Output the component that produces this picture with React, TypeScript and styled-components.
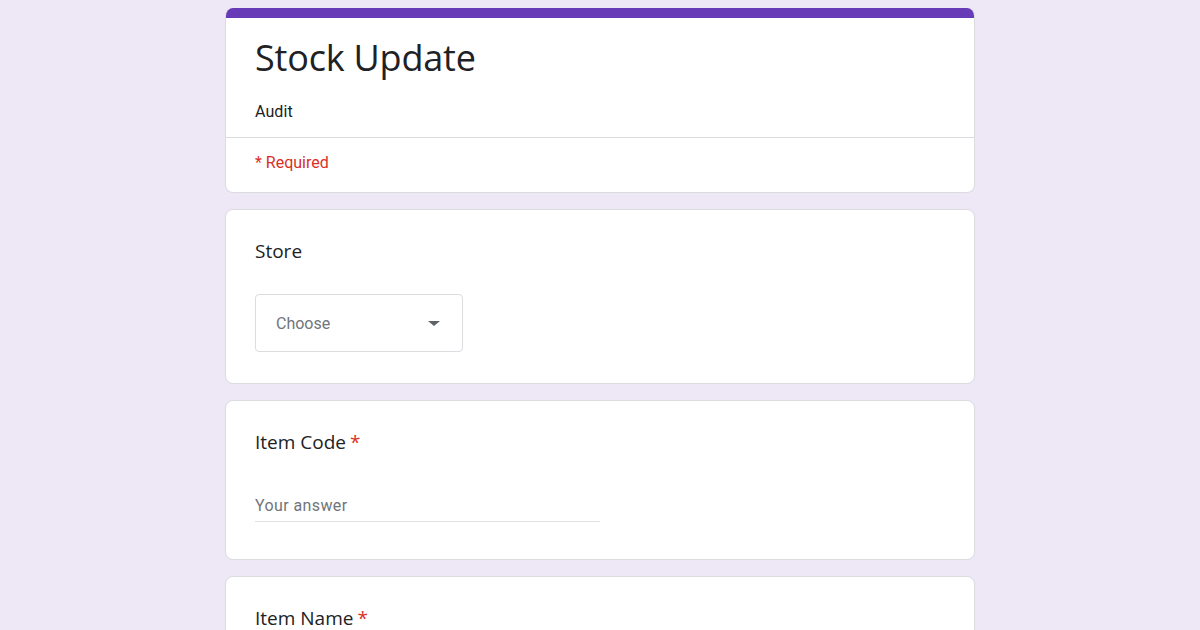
import React from 'react';
import styled, { createGlobalStyle } from 'styled-components';

const GlobalStyle = createGlobalStyle`
  html, body {
    margin: 0;
    padding: 0;
    background: #ede7f6;
  }
  * {
    box-sizing: border-box;
  }
`;

const Page = styled.div`
  display: flex;
  flex-direction: column;
  align-items: center;
  gap: 16px;
  padding: 8px 0 40px;
  font-family: Roboto, "Liberation Sans", sans-serif;
  color: #202124;
`;

const Card = styled.div`
  width: 750px;
  background: #ffffff;
  border: 1px solid #dadce0;
  border-radius: 8px;
  overflow: hidden;
`;

const HeaderCard = styled(Card)`
  border-top: none;
`;

const TopBar = styled.div`
  height: 10px;
  background: #673ab7;
`;

const HeaderBody = styled.div`
  padding: 19px 29px 15px;
  border-bottom: 1px solid #dadce0;
`;

const Title = styled.h1`
  margin: 0;
  font-family: "Open Sans", "Noto Sans", sans-serif;
  font-weight: 400;
  font-size: 36px;
  line-height: 42px;
  letter-spacing: -0.2px;
  color: #202124;
`;

const Description = styled.div`
  margin-top: 23px;
  font-size: 16px;
  line-height: 20px;
  letter-spacing: 0.1px;
`;

const RequiredNote = styled.div`
  padding: 15px 29px 19px;
  font-size: 16px;
  line-height: 20px;
  color: #d93025;
`;

const Question = styled.div`
  display: flex;
  flex-direction: column;
  align-items: flex-start;
  padding: 29px 29px 31px;
`;

const Label = styled.div`
  font-family: "Open Sans", "Noto Sans", sans-serif;
  font-size: 19px;
  line-height: 24px;
  color: #202124;
`;

const Star = styled.span`
  color: #d93025;
  margin-left: 4px;
`;

const Select = styled.div`
  margin-top: 31px;
  width: 208px;
  height: 58px;
  display: flex;
  align-items: center;
  justify-content: space-between;
  padding: 0 22px 0 20px;
  border: 1px solid #dadce0;
  border-radius: 4px;
  font-size: 16px;
  color: #70757a;
`;

const Caret = styled.span`
  width: 0;
  height: 0;
  border-left: 6px solid transparent;
  border-right: 6px solid transparent;
  border-top: 5px solid #5f6368;
`;

const Answer = styled.div`
  margin: 42px 0 6px;
  width: 50%;
  padding-bottom: 5px;
  border-bottom: 1px solid #e0e0e0;
  font-size: 16px;
  line-height: 20px;
  letter-spacing: 0.4px;
  color: #70757a;
`;

export default function App() {
  return (
    <>
      <GlobalStyle />
      <Page>
        <HeaderCard>
          <TopBar />
          <HeaderBody>
            <Title>Stock Update</Title>
            <Description>Audit</Description>
          </HeaderBody>
          <RequiredNote>* Required</RequiredNote>
        </HeaderCard>

        <Card>
          <Question>
            <Label>Store</Label>
            <Select>
              Choose
              <Caret />
            </Select>
          </Question>
        </Card>

        <Card>
          <Question>
            <Label>
              Item Code<Star>*</Star>
            </Label>
            <Answer>Your answer</Answer>
          </Question>
        </Card>

        <Card>
          <Question>
            <Label>
              Item Name<Star>*</Star>
            </Label>
            <Answer>Your answer</Answer>
          </Question>
        </Card>
      </Page>
    </>
  );
}
